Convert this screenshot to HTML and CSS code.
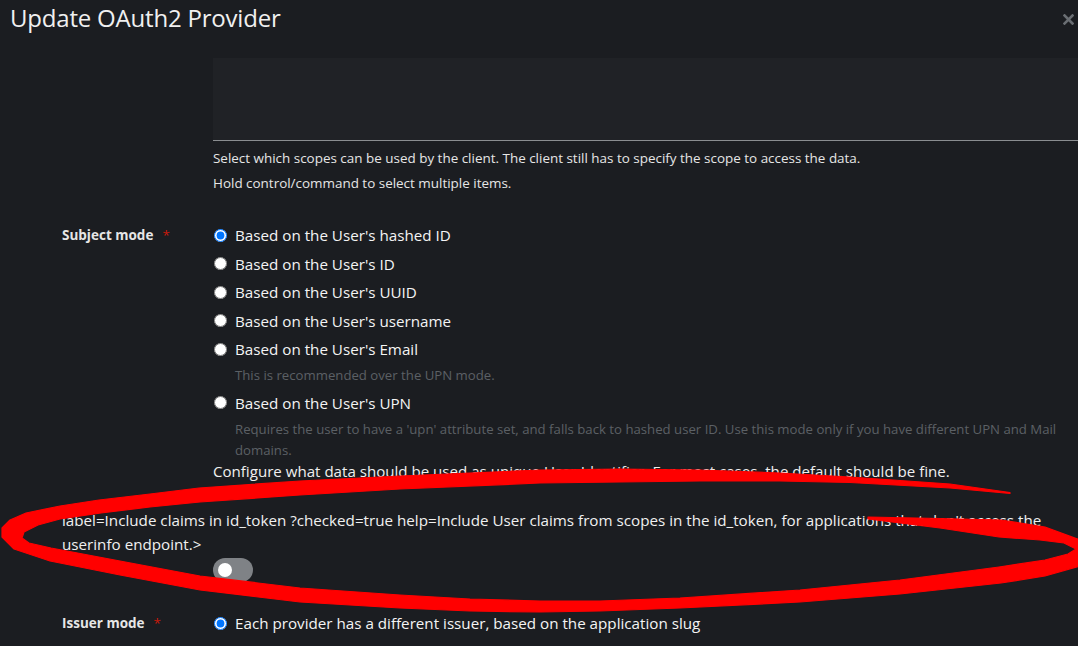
FILE: index.html
```html
<!DOCTYPE html>
<html lang="en">
<head>
<meta charset="utf-8">
<title>Update OAuth2 Provider</title>
<link rel="stylesheet" href="styles.css">
</head>
<body>
<div class="modal">
  <header class="modal-header">
    <h1 class="modal-title">Update OAuth2 Provider</h1>
    <button class="close-btn" aria-label="Close">
      <svg width="11" height="11" viewBox="0 0 11 11"><path d="M1.5 1.5 L9.5 9.5 M9.5 1.5 L1.5 9.5" stroke="#6a6e73" stroke-width="2.6" stroke-linecap="square"/></svg>
    </button>
  </header>

  <div class="modal-body">
    <div class="form-row scopes-row">
      <div class="form-label"></div>
      <div class="form-control">
        <div class="select-box"></div>
        <p class="helper first">Select which scopes can be used by the client. The client still has to specify the scope to access the data.</p>
        <p class="helper second">Hold control/command to select multiple items.</p>
      </div>
    </div>

    <div class="form-row subject-row">
      <div class="form-label"><span class="label-text">Subject mode</span><span class="req">*</span></div>
      <div class="form-control">
        <div class="radio-group">
          <div class="option">
            <label class="radio"><input type="radio" name="subject" checked><span>Based on the User's hashed ID</span></label>
          </div>
          <div class="option">
            <label class="radio"><input type="radio" name="subject"><span>Based on the User's ID</span></label>
          </div>
          <div class="option">
            <label class="radio"><input type="radio" name="subject"><span>Based on the User's UUID</span></label>
          </div>
          <div class="option">
            <label class="radio"><input type="radio" name="subject"><span>Based on the User's username</span></label>
          </div>
          <div class="option">
            <label class="radio"><input type="radio" name="subject"><span>Based on the User's Email</span></label>
            <p class="desc">This is recommended over the UPN mode.</p>
          </div>
          <div class="option">
            <label class="radio"><input type="radio" name="subject"><span>Based on the User's UPN</span></label>
            <p class="desc"><span class="line">Requires the user to have a 'upn' attribute set, and falls back to hashed user ID. Use this mode only if you have different UPN and Mail</span><span class="line">domains.</span></p>
          </div>
        </div>
        <p class="group-help">Configure what data should be used as unique User Identifier. For most cases, the default should be fine.</p>
      </div>
    </div>

    <p class="raw-text"><span class="line">label=Include claims in id_token ?checked=true help=Include User claims from scopes in the id_token, for applications that don't access the</span><span class="line">userinfo endpoint.&gt;</span></p>

    <div class="form-row switch-row">
      <div class="form-label"></div>
      <div class="form-control">
        <span class="switch"><span class="knob"></span></span>
      </div>
    </div>

    <div class="form-row issuer-row">
      <div class="form-label"><span class="label-text">Issuer mode</span><span class="req">*</span></div>
      <div class="form-control">
        <label class="radio"><input type="radio" name="issuer" checked><span>Each provider has a different issuer, based on the application slug</span></label>
      </div>
    </div>
  </div>

  <svg class="annotation" width="1078" height="646" viewBox="0 0 1078 646" aria-hidden="true">
    <polygon fill="#ff0000" stroke="#ff0000" stroke-width="1.2" stroke-linejoin="round"
      points="868,517 940,518.5 1001,520 1045,527 1080,540 1095,553 1080,566 1045,576 1001,583 900,594 800,602 680,608 600,611 540,612 470,611 400,608 300,602 200,590 120,575 50,561 14,549 2,537 2,528 10,520 26,513 60,506 99,500 150,494 199,488 300,481 400,476 540,470 620,469 700,470 780,473 850,477 950,484 1010,492.5 1010,493.5 950,488 850,482.5 780,481 700,481 620,482 540,483 400,489 300,495 200,502 150,507 101,513 60,519 38,525 24,532 22,538 29,543 51,548 120,561 200,576 300,588 400,595 470,599 540,601 600,601 680,598 800,590 900,580 999,567 1045,560 1068,554 1076,549 1064,543 1040,540 999,537 940,528 868,519"/>
  </svg>
</div>
</body>
</html>
```

FILE: styles.css
```css
html, body {
  margin: 0;
  padding: 0;
  background: #1b1d21;
}

body {
  width: 1078px;
  height: 646px;
  overflow: hidden;
  font-family: "Open Sans", "Noto Sans", sans-serif;
  color: #e8e8e8;
}

.modal {
  position: relative;
  width: 1078px;
  height: 646px;
}

.modal-header {
  display: flex;
  justify-content: space-between;
  align-items: flex-start;
  padding: 3px 4px 0 10px;
  height: 34px;
  box-sizing: border-box;
}

.modal-title {
  margin: 0;
  font-size: 24px;
  line-height: 30px;
  font-weight: 500;
  color: #f0f0f0;
  letter-spacing: -0.2px;
}

.close-btn {
  background: none;
  border: 0;
  padding: 0;
  margin-top: 11px;
  width: 11px;
  height: 11px;
  line-height: 0;
}

.modal-body {
  padding: 24px 0 0 62px;
}

.form-row {
  display: grid;
  grid-template-columns: 151px 1fr;
}

.form-label {
  font-size: 13.5px;
  font-weight: 700;
  color: #e6e6e6;
  line-height: 24px;
}

.req {
  color: #c9190b;
  margin-left: 9px;
  font-weight: 400;
}

.select-box {
  height: 82px;
  background: #202226;
  border-bottom: 1px solid #8a8d90;
}

.helper {
  margin: 0;
  font-size: 13.45px;
  line-height: 20px;
  color: #e6e6e6;
  white-space: nowrap;
}

.helper.first { margin-top: 7px; }
.helper.second { margin-top: 5px; }

.subject-row { margin-top: 30px; }

.radio-group {
  display: flex;
  flex-direction: column;
  gap: 4.5px;
}

.radio {
  display: flex;
  align-items: center;
  gap: 8px;
  font-size: 15.2px;
  line-height: 24px;
  color: #f4f4f4;
  white-space: nowrap;
}

.radio input {
  margin: 0 0 0 1px;
  width: 13px;
  height: 13px;
  flex: none;
}

.desc {
  margin: 4px 0 0 22px;
  font-size: 13.2px;
  line-height: 21px;
  color: #5c6065;
}

.line {
  display: block;
  white-space: nowrap;
}

.group-help {
  margin: 0;
  font-size: 15.1px;
  line-height: 21px;
  color: #f0f0f0;
  white-space: nowrap;
}

.raw-text {
  margin: 26.5px 0 0 0;
  font-size: 15.2px;
  line-height: 24px;
  color: #f0f0f0;
}

.switch-row { margin-top: 2px; }

.switch {
  display: flex;
  align-items: center;
  width: 40px;
  height: 24px;
  border-radius: 12px;
  background: #7f8286;
  padding-left: 5px;
  box-sizing: border-box;
}

.knob {
  width: 14px;
  height: 14px;
  border-radius: 50%;
  background: #ffffff;
}

.issuer-row { margin-top: 29px; }

.annotation {
  position: absolute;
  top: 0;
  left: 0;
  pointer-events: none;
}
```
